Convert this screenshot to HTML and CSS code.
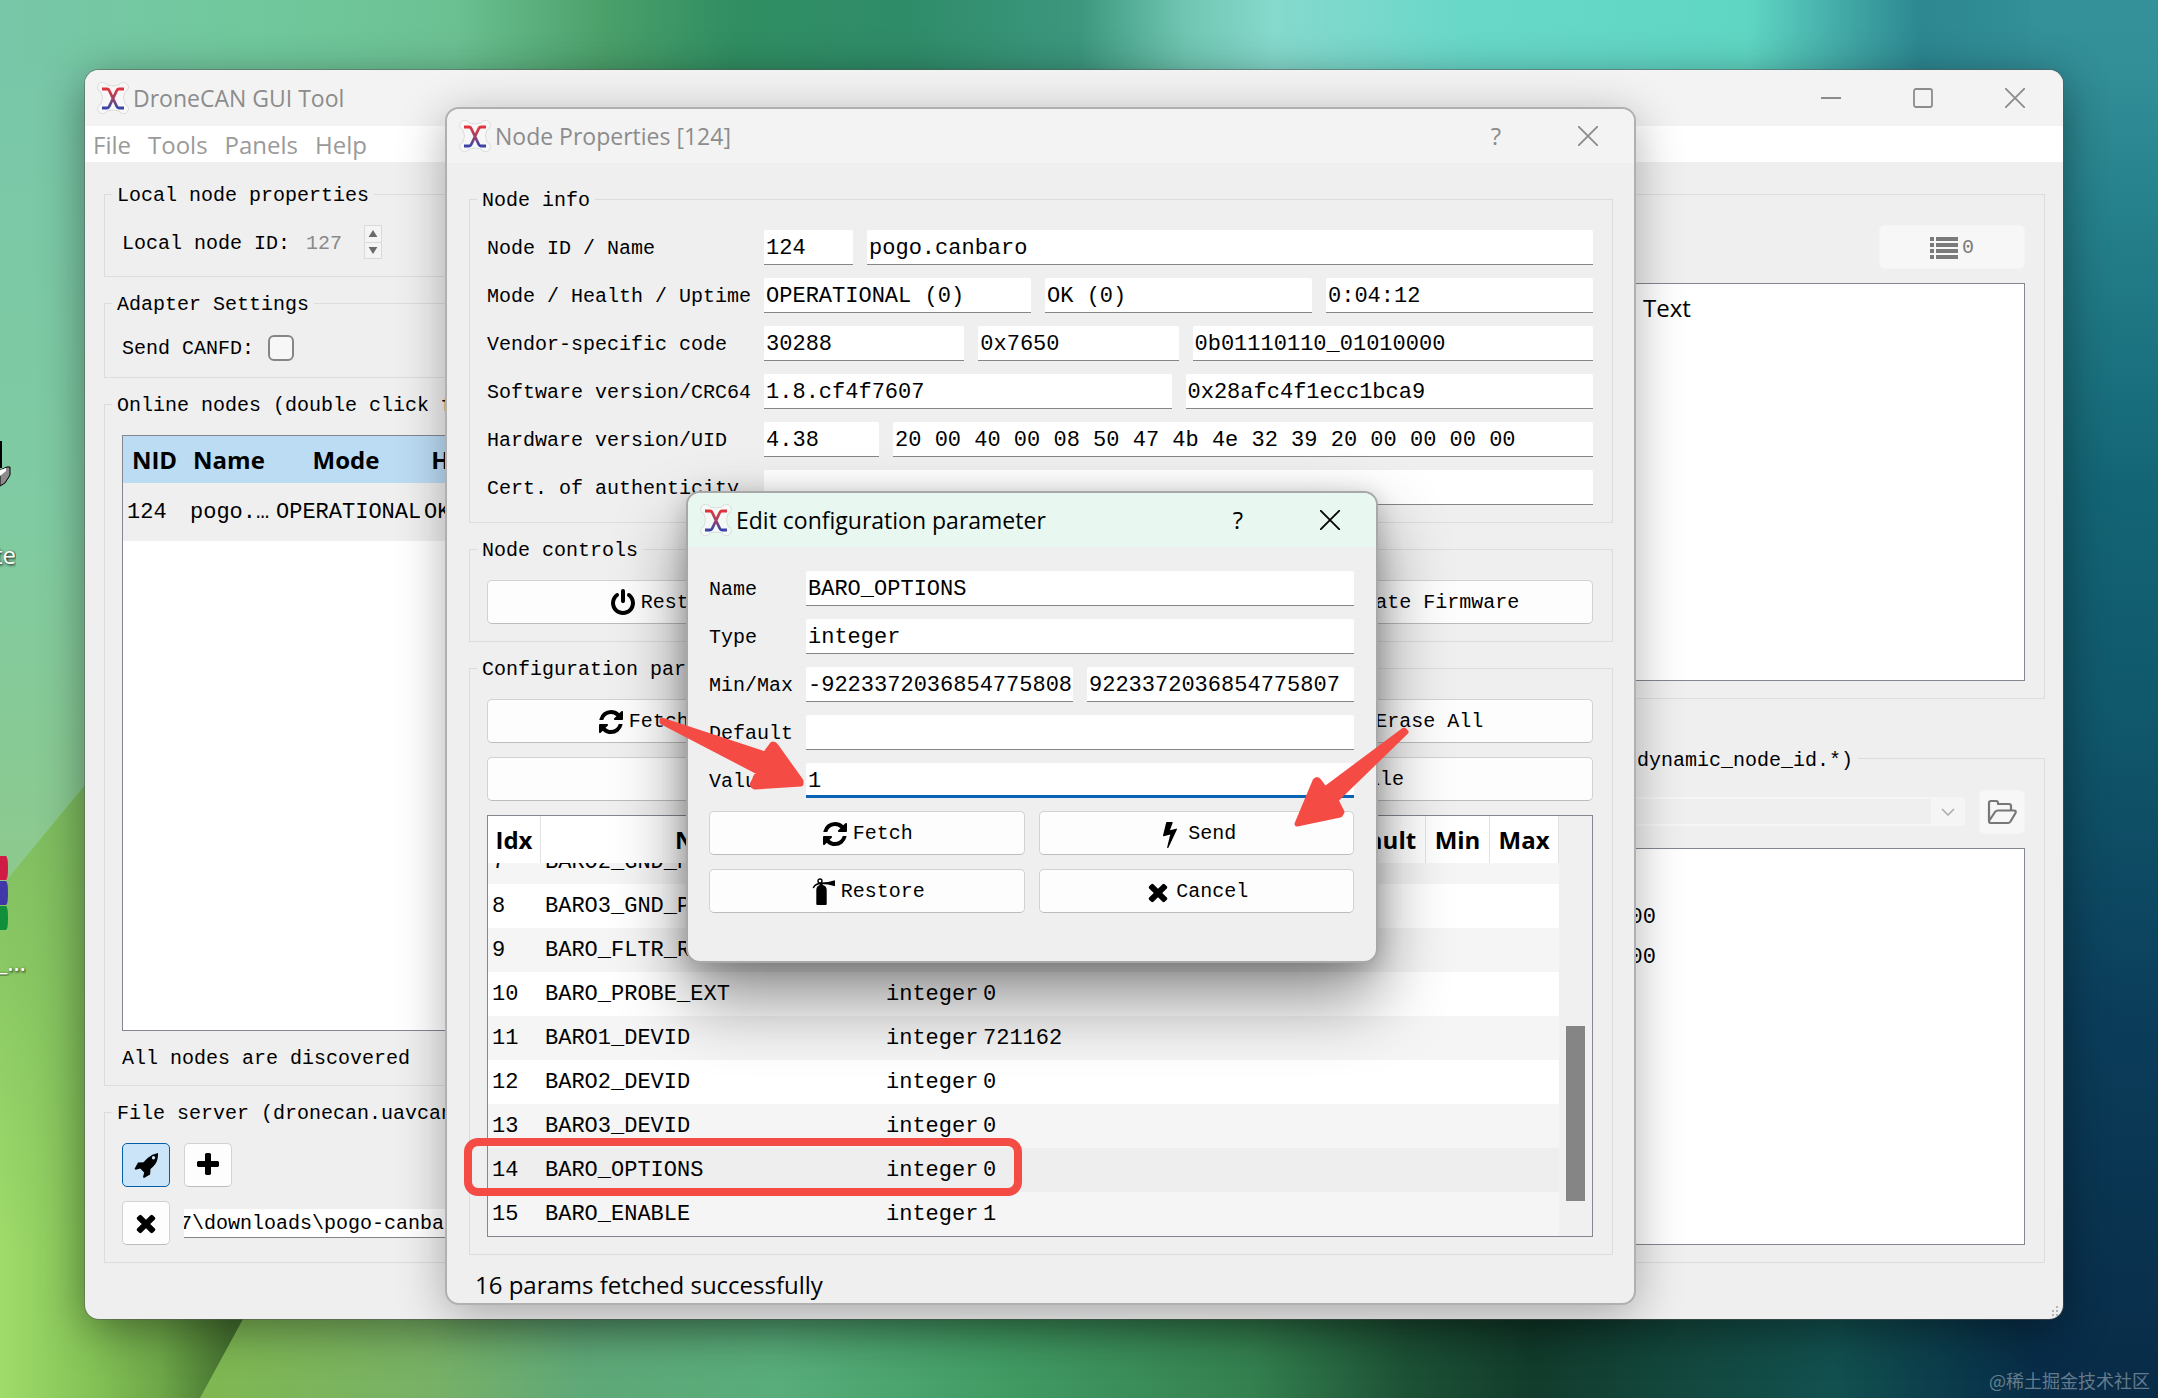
FILE: index.html
```
<!DOCTYPE html>
<html lang="en">
<head>
    <meta charset="UTF-8">
    <title>DroneCAN GUI Tool</title>
    <link rel="stylesheet" href="styles.css">
</head>
<body>
<svg class="sprite" aria-hidden="true">
    <defs>
        <linearGradient id="logo-fill" gradientUnits="userSpaceOnUse" x1="0" y1="5" x2="0" y2="28">
            <stop offset="0.1" stop-color="#e0343f"/>
            <stop offset="0.5" stop-color="#a04468"/>
            <stop offset="0.9" stop-color="#3a44a8"/>
        </linearGradient>
    </defs>
    <symbol id="logo" viewBox="0 0 32 32">
        <path d="M10 3a5 5 0 1 0-6 7q3 6 0 12a5 5 0 1 0 6 7q6-2 12 0a5 5 0 1 0 6-7q-3-6 0-12a5 5 0 1 0-6-7q-6 2-12 0z" fill="#fafafa" fill-opacity=".6" stroke="#dcdcdc"/>
        <path d="M5 7h5q1.500 0 2.200 1.500l7.600 16q.7 1.500 2.200 1.500h5M27 7h-5q-1.500 0-2.200 1.500l-7.600 16q-.7 1.500-2.200 1.500H5" fill="none" stroke="url(#logo-fill)" stroke-width="2.800"/>
    </symbol>
    <symbol id="refresh" viewBox="0 0 1792 1792">
        <path d="M1639 1056q0 5-1 7-64 268-268 434.500t-478 166.500q-146 0-282.500-55t-243.500-157l-129 129q-19 19-45 19t-45-19-19-45v-448q0-26 19-45t45-19h448q26 0 45 19t19 45-19 45l-137 137q71 66 161 102t187 36q134 0 250-65t186-179q11-17 53-117 8-23 30-23h192q13 0 22.500 9.500t9.500 22.500zm25-800v448q0 26-19 45t-45 19h-448q-26 0-45-19t-19-45 19-45l138-138q-148-137-349-137-134 0-250 65t-186 179q-11 17-53 117-8 23-30 23h-199q-13 0-22.500-9.500t-9.500-22.500v-7q65-268 270-434.500t480-166.500q146 0 284 55.500t245 156.500l130-129q19-19 45-19t45 19 19 45z"/>
    </symbol>
    <symbol id="bolt" viewBox="0 0 1792 1792">
        <path d="M1333 566q18 20 7 44l-540 1157q-13 25-42 25-4 0-14-2-17-5-25.500-19t-4.500-30l197-808-406 101q-4 1-12 1-18 0-31-11-18-15-13-39l201-825q4-14 16-23t28-9h328q19 0 32 12.500t13 29.500q0 8-5 18l-171 463 396-98q8-2 12-2 19 0 34 15z"/>
    </symbol>
    <symbol id="power" viewBox="0 0 1792 1792">
        <path d="M1664 896q0 156-61 298t-164 245-245 164-298 61-298-61-245-164-164-245-61-298q0-182 80.500-343t226.500-270q43-32 95.500-25t83.500 50q32 42 24.500 94.500t-49.500 84.500q-98 74-151.500 181t-53.500 228q0 104 40.500 198.500t109.500 163.500 163.500 109.500 198.500 40.500 198.500-40.500 163.500-109.500 109.500-163.500 40.500-198.500q0-121-53.500-228t-151.500-181q-42-32-49.500-84.500t24.500-94.500q31-43 84-50t95 25q146 109 226.500 270t80.500 343zm-640-768v640q0 52-38 90t-90 38-90-38-38-90v-640q0-52 38-90t90-38 90 38 38 90z"/>
    </symbol>
    <symbol id="times" viewBox="0 0 1792 1792">
        <path d="M1490 1322q0 40-28 68l-136 136q-28 28-68 28t-68-28l-294-294-294 294q-28 28-68 28t-68-28l-136-136q-28-28-28-68t28-68l294-294-294-294q-28-28-28-68t28-68l136-136q28-28 68-28t68 28l294 294 294-294q28-28 68-28t68 28l136 136q28 28 28 68t-28 68l-294 294 294 294q28 28 28 68z"/>
    </symbol>
    <symbol id="plus" viewBox="0 0 1792 1792">
        <path d="M1600 736v192q0 40-28 68t-68 28h-416v416q0 40-28 68t-68 28h-192q-40 0-68-28t-28-68v-416h-416q-40 0-68-28t-28-68v-192q0-40 28-68t68-28h416v-416q0-40 28-68t68-28h192q40 0 68 28t28 68v416h416q40 0 68 28t28 68z"/>
    </symbol>
    <symbol id="extinguisher" viewBox="0 0 28 28">
        <path d="M7.300 12q0-4 3.500-5V5h3v2q3.900 1 3.900 5v14q0 1-1 1H8.300q-1 0-1-1z"/>
        <path d="M12 4.600l7-.6 6-1.600q1-.2 1 .6v4.500q0 .8-1 .6l-6-1.600-7-.6z"/>
        <circle cx="11" cy="3" r="2" fill="none" stroke="#000" stroke-width="1.400"/>
        <path d="M12 5.500Q6.500 5.500 4.500 9.500" fill="none" stroke="#000" stroke-width="1.600" stroke-linecap="round"/>
    </symbol>
    <symbol id="rocket" viewBox="0 0 28 28">
        <path fill-rule="evenodd" d="M26 2q.4 7-3 11.500-1.500 2-4.500 4.500l-.4 5.500-6.100 3.500-1-1 1.200-4.500-4-4-4.700 1.200-.9-1L6 11.600l5.500-.4q2.500-3 4.500-4.500Q20 3 26 2zM21.500 5a1.700 1.700 0 1 0 0 3.400 1.700 1.700 0 0 0 0-3.400z"/>
    </symbol>
    <symbol id="list" viewBox="0 0 28 28">
        <path d="M0 3h4v4H0zM6 3h22v4H6zM0 9h4v4H0zM6 9h22v4H6zM0 15h4v4H0zM6 15h22v4H6zM0 21h4v4H0zM6 21h22v4H6z"/>
    </symbol>
    <symbol id="folder" viewBox="0 0 30 28">
        <path d="M2 23V5q0-2 2-2h5q2 0 2 2v1h11q2 0 2 2v4M2 23q0 2 2 2h17q1.500 0 2.500-1.500L28.500 15q1-2.500-1.500-2.500H11q-2 0-3 1.500z" fill="none" stroke="#777" stroke-width="2.200" stroke-linejoin="round"/>
    </symbol>
    <symbol id="close" viewBox="0 0 20 20">
        <path d="M0 0l20 20M20 0L0 20" fill="none" stroke="currentColor" stroke-width="1.800"/>
    </symbol>
</svg>

<div class="desktop">
    <svg class="wallpaper" viewBox="0 0 2158 1398" preserveAspectRatio="none" aria-hidden="true">
        <defs>
            <linearGradient id="w-top">
                <stop offset="0" stop-color="#78c7a8"/>
                <stop offset=".12" stop-color="#70c89c"/>
                <stop offset=".21" stop-color="#6cc193"/>
                <stop offset=".28" stop-color="#4ba06a"/>
                <stop offset=".34" stop-color="#308e62"/>
                <stop offset=".42" stop-color="#2f8c69"/>
                <stop offset=".5" stop-color="#3c977e"/>
                <stop offset=".55" stop-color="#70c6b2"/>
                <stop offset=".59" stop-color="#86d9cd"/>
                <stop offset=".68" stop-color="#68d8c9"/>
                <stop offset=".81" stop-color="#5fd6c3"/>
                <stop offset=".86" stop-color="#3fa3a3"/>
                <stop offset=".89" stop-color="#2c8791"/>
                <stop offset=".94" stop-color="#328e97"/>
            </linearGradient>
            <linearGradient id="w-left" x1="0" y1="0" x2="0" y2="1">
                <stop offset="0" stop-color="#78c7a8"/>
                <stop offset=".5" stop-color="#80cba2"/>
                <stop offset="1" stop-color="#90c988"/>
            </linearGradient>
            <linearGradient id="w-lime" x1="0" y1="1398" x2="230" y2="1398" gradientUnits="userSpaceOnUse">
                <stop offset="0" stop-color="#9fdc6b"/>
                <stop offset=".4" stop-color="#84c256"/>
                <stop offset=".7" stop-color="#6da648"/>
                <stop offset="1" stop-color="#44702f"/>
            </linearGradient>
            <linearGradient id="w-hill" x1="0" y1="0" x2="0" y2="1">
                <stop offset="0" stop-color="#7cba60"/>
                <stop offset="1" stop-color="#7cba60" stop-opacity="0"/>
            </linearGradient>
            <linearGradient id="w-bottom">
                <stop offset=".1" stop-color="#7fb852"/>
                <stop offset=".2" stop-color="#78b166"/>
                <stop offset=".27" stop-color="#5fa878"/>
                <stop offset=".36" stop-color="#58ad7a"/>
                <stop offset=".46" stop-color="#429c64"/>
                <stop offset=".58" stop-color="#34804f"/>
                <stop offset=".65" stop-color="#1d5236"/>
                <stop offset=".71" stop-color="#123c2c"/>
                <stop offset=".78" stop-color="#13483e"/>
                <stop offset=".85" stop-color="#12504f"/>
                <stop offset=".92" stop-color="#09354a"/>
                <stop offset=".94" stop-color="#082e48"/>
            </linearGradient>
            <linearGradient id="w-right" x1="0" y1="0" x2="0" y2="1">
                <stop offset="0" stop-color="#34919a"/>
                <stop offset=".05" stop-color="#328e97"/>
                <stop offset=".15" stop-color="#25818c"/>
                <stop offset=".35" stop-color="#136575"/>
                <stop offset=".52" stop-color="#10576b"/>
                <stop offset=".72" stop-color="#0b3e5b"/>
                <stop offset="1" stop-color="#082b47"/>
            </linearGradient>
        </defs>
        <path d="M0 0h2158v700H0z" fill="url(#w-top)"/>
        <path d="M0 700h2158v698H0z" fill="url(#w-bottom)"/>
        <path d="M0 70h110v900H0z" fill="url(#w-left)"/>
        <path d="M2030 0h128v1398h-128z" fill="url(#w-right)"/>
        <path d="M0 888L110 755H300V1200L243 1319 200 1398H0z" fill="url(#w-lime)"/>
        <path d="M0 888L110 755V1250H0z" fill="url(#w-hill)"/>
        <!-- desktop icons cut off by the left edge -->
        <path d="M0 441h2v27H0z"/>
        <path d="M0 470l7-3h3v8l-5 8-5 3z" fill="#8c8c8c" stroke="#000"/>
        <path d="M0 470l6-2v3l-6 5z" fill="#fff"/>
        <path d="M0 856h6q2 1 2 12t-2 12H0z" fill="#d01c44"/>
        <path d="M0 881h6q2 1 2 12t-2 12H0z" fill="#4038a8"/>
        <path d="M0 906h6q2 1 2 12t-2 12H0z" fill="#10903a"/>
    </svg>
    <span class="shortcut shortcut-note">te</span>
    <span class="shortcut shortcut-rar">_…</span>

    <main class="window main-window">
        <header class="title-bar">
            <svg class="logo"><use href="#logo"/></svg>
            <h1 class="title">DroneCAN GUI Tool</h1>
            <button class="caption-btn" aria-label="Minimize"><svg viewBox="0 0 20 20"><path d="M0 10h20" stroke="currentColor" stroke-width="2"/></svg></button>
            <button class="caption-btn" aria-label="Maximize"><svg viewBox="0 0 20 20"><rect x="1" y="1" width="18" height="18" rx="2" fill="none" stroke="currentColor" stroke-width="1.800"/></svg></button>
            <button class="caption-btn" aria-label="Close"><svg><use href="#close"/></svg></button>
        </header>
        <nav class="menu-bar">
            <a href="#">File</a>
            <a href="#">Tools</a>
            <a href="#">Panels</a>
            <a href="#">Help</a>
        </nav>
        <div class="main-body">
            <div class="column">
                <fieldset class="group">
                    <legend>Local node properties</legend>
                    <div class="row">
                        <label for="local-id">Local node ID:</label>
                        <input class="spin-value" id="local-id" type="text" value="127" disabled>
                        <span class="spin">
                            <button aria-label="Increase" disabled><svg viewBox="0 0 10 8"><path d="M0 8l5-8 5 8z"/></svg></button>
                            <button aria-label="Decrease" disabled><svg viewBox="0 0 10 8"><path d="M0 0l5 8 5-8z"/></svg></button>
                        </span>
                    </div>
                </fieldset>
                <fieldset class="group adapter-group">
                    <legend>Adapter Settings</legend>
                    <div class="row">
                        <label for="canfd">Send CANFD:</label>
                        <input class="check" id="canfd" type="checkbox">
                    </div>
                </fieldset>
                <fieldset class="group group-grow nodes-group">
                    <legend>Online nodes (double click for more options)</legend>
                    <div class="view">
                        <table class="nodes">
                            <thead>
                                <tr><th class="c-nid">NID</th><th class="c-name">Name</th><th class="c-mode">Mode</th><th class="c-health">Health</th><th></th></tr>
                            </thead>
                            <tbody>
                                <tr><td>124</td><td>pogo.…</td><td>OPERATIONAL</td><td>OK</td><td></td></tr>
                            </tbody>
                        </table>
                    </div>
                    <p class="note">All nodes are discovered</p>
                </fieldset>
                <fieldset class="group file-group">
                    <legend>File server (dronecan.uavcan.protocol.file.*)</legend>
                    <div class="row">
                        <button class="btn btn-square btn-on" aria-label="Start"><svg class="icon"><use href="#rocket"/></svg></button>
                        <button class="btn btn-square" aria-label="Add path"><svg class="icon"><use href="#plus"/></svg></button>
                    </div>
                    <div class="row">
                        <button class="btn btn-square" aria-label="Remove path"><svg class="icon"><use href="#times"/></svg></button>
                        <input class="path" type="text" aria-label="Path" value="7\downloads\pogo-canbaro.bin">
                    </div>
                </fieldset>
            </div>
            <div class="column column-right">
                <fieldset class="group group-grow">
                    <legend></legend>
                    <div class="row row-end">
                        <button class="btn btn-count" disabled><svg class="icon"><use href="#list"/></svg>0</button>
                    </div>
                    <div class="view">
                        <table class="log">
                            <thead><tr><th class="c-rest"></th><th>Text</th></tr></thead>
                        </table>
                    </div>
                </fieldset>
                <fieldset class="group group-grow">
                    <legend>Dynamic node ID allocation server (dronecan.uavcan.protocol.dynamic_node_id.*)</legend>
                    <div class="row">
                        <span class="combo">
                            <select aria-label="Database" disabled><option></option></select>
                            <svg viewBox="0 0 14 8"><path d="M1 1l6 6 6-6" fill="none" stroke="#aaa" stroke-width="1.500"/></svg>
                        </span>
                        <button class="btn btn-folder" aria-label="Open" disabled><svg class="icon-folder"><use href="#folder"/></svg></button>
                    </div>
                    <div class="view">
                        <table class="alloc">
                            <tbody>
                                <tr><td class="c-uid">00 00 00 00</td><td></td></tr>
                                <tr><td class="c-uid">00 00 00 00</td><td></td></tr>
                            </tbody>
                        </table>
                    </div>
                </fieldset>
            </div>
        </div>
        <svg class="grip" viewBox="0 0 10 10"><path d="M6 0h2v2H6zM6 4h2v2H6zM2 4h2v2H2zM6 8h2v2H6zM2 8h2v2H2z" fill="#b4b4b4"/></svg>
    </main>

    <section class="window dialog node-dialog">
        <header class="title-bar">
            <svg class="logo"><use href="#logo"/></svg>
            <h2 class="title">Node Properties [124]</h2>
            <button class="caption-btn">?</button>
            <button class="caption-btn" aria-label="Close"><svg><use href="#close"/></svg></button>
        </header>
        <div class="node-body">
            <fieldset class="group node-group">
                <legend>Node info</legend>
                <div class="form">
                    <label for="node-id">Node ID / Name</label>
                    <div class="fields fields-id">
                        <input class="field" id="node-id" value="124" readonly>
                        <input class="field" aria-label="Name" value="pogo.canbaro" readonly>
                    </div>
                    <label for="mode">Mode / Health / Uptime</label>
                    <div class="fields fields-three">
                        <input class="field" id="mode" value="OPERATIONAL (0)" readonly>
                        <input class="field" aria-label="Health" value="OK (0)" readonly>
                        <input class="field" aria-label="Uptime" value="0:04:12" readonly>
                    </div>
                    <label for="vendor">Vendor-specific code</label>
                    <div class="fields fields-vendor">
                        <input class="field" id="vendor" value="30288" readonly>
                        <input class="field" aria-label="Hex" value="0x7650" readonly>
                        <input class="field" aria-label="Binary" value="0b01110110_01010000" readonly>
                    </div>
                    <label for="sw">Software version/CRC64</label>
                    <div class="fields fields-two">
                        <input class="field" id="sw" value="1.8.cf4f7607" readonly>
                        <input class="field" aria-label="CRC64" value="0x28afc4f1ecc1bca9" readonly>
                    </div>
                    <label for="hw">Hardware version/UID</label>
                    <div class="fields fields-hw">
                        <input class="field" id="hw" value="4.38" readonly>
                        <input class="field" aria-label="UID" value="20 00 40 00 08 50 47 4b 4e 32 39 20 00 00 00 00" readonly>
                    </div>
                    <label for="cert">Cert. of authenticity</label>
                    <div class="fields">
                        <input class="field" id="cert" value="" readonly>
                    </div>
                </div>
            </fieldset>
            <fieldset class="group node-group">
                <legend>Node controls</legend>
                <div class="buttons-three">
                    <button class="btn"><svg class="icon"><use href="#power"/></svg>Restart</button>
                    <button class="btn">Get Transport Stats</button>
                    <button class="btn"><svg class="icon"><use href="#bolt"/></svg>Update Firmware</button>
                </div>
            </fieldset>
            <fieldset class="group group-grow node-group params-group">
                <legend>Configuration parameters (double click to change)</legend>
                <div class="buttons-three">
                    <button class="btn"><svg class="icon"><use href="#refresh"/></svg>Fetch All</button>
                    <button class="btn">Store All</button>
                    <button class="btn"><svg class="icon"><use href="#extinguisher"/></svg>Erase All</button>
                </div>
                <div class="fields-two">
                    <button class="btn">Save To File</button>
                    <button class="btn">Load From File</button>
                </div>
                <div class="view params-view">
                    <div class="params-scroll">
                        <table class="params">
                            <thead>
                                <tr><th class="c-idx">Idx</th><th class="c-param">Name</th><th class="c-type">Type</th><th>Value</th><th class="c-default">Default</th><th class="c-min">Min</th><th class="c-max">Max</th></tr>
                            </thead>
                            <tbody>
                                <tr><td>7</td><td>BARO2_GND_PRESS</td><td>real</td><td>0.0</td><td></td><td></td><td></td></tr>
                                <tr><td>8</td><td>BARO3_GND_PRESS</td><td>real</td><td>0.0</td><td></td><td></td><td></td></tr>
                                <tr><td>9</td><td>BARO_FLTR_RNG</td><td>integer</td><td>0</td><td></td><td></td><td></td></tr>
                                <tr><td>10</td><td>BARO_PROBE_EXT</td><td>integer</td><td>0</td><td></td><td></td><td></td></tr>
                                <tr><td>11</td><td>BARO1_DEVID</td><td>integer</td><td>721162</td><td></td><td></td><td></td></tr>
                                <tr><td>12</td><td>BARO2_DEVID</td><td>integer</td><td>0</td><td></td><td></td><td></td></tr>
                                <tr><td>13</td><td>BARO3_DEVID</td><td>integer</td><td>0</td><td></td><td></td><td></td></tr>
                                <tr class="selected"><td>14</td><td>BARO_OPTIONS</td><td>integer</td><td>0</td><td></td><td></td><td></td></tr>
                                <tr><td>15</td><td>BARO_ENABLE</td><td>integer</td><td>1</td><td></td><td></td><td></td></tr>
                            </tbody>
                        </table>
                    </div>
                    <div class="scrollbar"><div class="thumb"></div></div>
                </div>
            </fieldset>
            <p class="status">16 params fetched successfully</p>
        </div>
    </section>

    <section class="window dialog edit-dialog">
        <header class="title-bar">
            <svg class="logo"><use href="#logo"/></svg>
            <h2 class="title">Edit configuration parameter</h2>
            <button class="caption-btn">?</button>
            <button class="caption-btn" aria-label="Close"><svg><use href="#close"/></svg></button>
        </header>
        <div class="edit-body">
            <div class="form">
                <label for="p-name">Name</label>
                <div class="fields"><input class="field" id="p-name" value="BARO_OPTIONS" readonly></div>
                <label for="p-type">Type</label>
                <div class="fields"><input class="field" id="p-type" value="integer" readonly></div>
                <label for="p-min">Min/Max</label>
                <div class="fields fields-two">
                    <input class="field" id="p-min" value="-9223372036854775808" readonly>
                    <input class="field" aria-label="Max" value="9223372036854775807" readonly>
                </div>
                <label for="p-default">Default</label>
                <div class="fields"><input class="field" id="p-default" value="" readonly></div>
                <label for="p-value">Value</label>
                <div class="fields"><input class="field field-active" id="p-value" value="1"></div>
            </div>
            <div class="buttons-two">
                <button class="btn"><svg class="icon"><use href="#refresh"/></svg>Fetch</button>
                <button class="btn"><svg class="icon"><use href="#bolt"/></svg>Send</button>
                <button class="btn"><svg class="icon"><use href="#extinguisher"/></svg>Restore</button>
                <button class="btn"><svg class="icon"><use href="#times"/></svg>Cancel</button>
            </div>
        </div>
    </section>

    <!-- red marks over the windows -->
    <div class="mark-box"></div>
    <svg class="mark-arrow mark-value" viewBox="0 0 150 80"><path d="M8 6L111 40 117 32Q119 28 122 32L147 67 147 70 101 73Q97 72 99 69L104 58 8 8z"/></svg>
    <svg class="mark-arrow mark-send" viewBox="0 0 120 104"><path d="M112 6L114 8 44 76 50 88 48 91 5 100 23 57Q25 54 27 57L33 65z"/></svg>

    <span class="watermark">@稀土掘金技术社区</span>
</div>
</body>
</html>
```

FILE: styles.css
```
*{
    box-sizing:border-box;
    margin:0;
    padding:0;
}
body{
    font-family:"Liberation Mono", "Noto Sans CJK SC", monospace;
    font-size:20px;
    line-height:28px;
    color:#000;
}
button,input,select{
    font:inherit;
    color:inherit;
}
label{
    padding-top:3px;
}
.sprite{
    position:absolute;
    width:0;
    height:0;
}
.desktop{
    position:relative;
    min-height:100vh;
    overflow:hidden;
    background:#2f8c69;
}
.wallpaper{
    position:absolute;
    width:100%;
    height:100%;
}
.shortcut{
    position:absolute;
    left:0;
    display:flex;
    justify-content:flex-end;
    overflow:hidden;
    font-family:"Open Sans", sans-serif;
    font-size:24px;
    color:#fff;
    text-shadow:1px 1px 3px #000;
}
.shortcut-note{
    top:541px;
    width:16px;
}
.shortcut-rar{
    top:948px;
    width:26px;
}

/* windows */
.window{
    position:absolute;
    display:flex;
    flex-direction:column;
    border-radius:14px;
    overflow:hidden;
    background:#efefef;
}
.main-window{
    top:70px;
    right:95px;
    bottom:79px;
    left:85px;
    box-shadow:0 0 0 1px rgba(90,90,90,.5), 0 10px 46px rgba(0,0,0,.42);
}
.dialog{
    border:2px solid #b0b0b0;
}
.node-dialog{
    top:107px;
    right:522px;
    bottom:93px;
    left:445px;
    box-shadow:0 10px 48px rgba(0,0,0,.3);
}
.edit-dialog{
    top:491px;
    left:686px;
    width:692px;
    border-color:#a8a8a8;
    box-shadow:0 36px 70px rgba(0,0,0,.45), 0 4px 24px rgba(0,0,0,.2);
}
.title-bar{
    display:flex;
    align-items:center;
    flex:none;
    height:56px;
    padding-right:2px;
    padding-left:12px;
    background:#f3f3f3;
    color:#8c8c8c;
}
.dialog .title-bar{
    height:54px;
    padding-right:0;
}
.edit-dialog .title-bar{
    background:#e8f8f0;
    color:#000;
}
.logo{
    width:32px;
    height:32px;
}
.title{
    flex:1;
    padding-left:4px;
    font-family:"Open Sans", sans-serif;
    font-size:23px;
    font-weight:400;
}
.caption-btn{
    width:92px;
    height:54px;
    border:0;
    background:none;
    font-family:"Open Sans", sans-serif;
    font-size:24px;
}
.caption-btn svg{
    display:block;
    width:20px;
    height:20px;
    margin:0 auto;
    overflow:visible;
}
.menu-bar{
    display:flex;
    flex:none;
    gap:17px;
    height:36px;
    padding-left:8px;
    background:#fff;
    font-family:"Open Sans", sans-serif;
    font-size:24px;
    line-height:38px;
}
.menu-bar a{
    color:#9a9a9a;
    text-decoration:none;
}
.main-body{
    flex:1;
    min-height:0;
    display:grid;
    grid-template-columns:20fr 29fr;
    gap:13px;
    padding:18px 18px 56px 19px;
}
.column{
    display:flex;
    flex-direction:column;
    gap:12px;
    min-width:0;
    min-height:0;
}
.column-right{
    gap:46px;
}
.grip{
    position:absolute;
    right:3px;
    bottom:3px;
    width:10px;
    height:10px;
}

/* group boxes */
.group{
    min-width:0;
    padding:17px;
    border:1px solid #dcdcdc;
}
.group legend{
    height:28px;
    margin-left:-10px;
    padding:2px 5px 0;
    white-space:nowrap;
}
.group legend:empty{
    padding:0;
}
.group-grow{
    flex:1;
    display:flex;
    flex-direction:column;
    gap:14px;
    min-height:0;
}
.column-right .group{
    padding-right:19px;
}
.row{
    display:flex;
    align-items:center;
    gap:14px;
}
.row-end{
    justify-content:flex-end;
}
.view{
    flex:1;
    min-height:0;
    border:1px solid #828790;
    background:#fff;
    overflow:hidden;
}
.spin-value{
    width:46px;
    height:32px;
    padding:3px 0 0 2px;
    border:0;
    background:none;
    color:#8a8a8a;
}
.spin{
    display:flex;
    flex-direction:column;
    width:18px;
    height:34px;
    border:1px solid #dadada;
}
.spin button{
    flex:1;
    border:0;
    background:#f4f4f4;
}
.spin button + button{
    border-top:1px solid #dadada;
}
.spin svg{
    display:block;
    width:10px;
    height:7px;
    margin:0 auto;
    fill:#6a6a6a;
}
.adapter-group{
    padding-top:15px;
    padding-bottom:14px;
}
.check{
    appearance:none;
    width:26px;
    height:26px;
    border:2px solid #868686;
    border-radius:6px;
    background:#f7f7f7;
}
.nodes-group{
    padding-bottom:12px;
}
.file-group{
    display:flex;
    flex-direction:column;
    gap:14px;
}
.path{
    flex:1;
    height:29px;
    padding-top:2px;
    border:0;
    border-bottom:1px solid #868686;
    background:#fff;
    text-indent:-4px;
}
.combo{
    position:relative;
    flex:1;
    height:29px;
}
.combo select{
    appearance:none;
    display:block;
    width:100%;
    height:100%;
    border:2px solid #f8f8f8;
    border-right-width:34px;
    border-radius:3px;
    background:#efefef;
}
.combo svg{
    position:absolute;
    top:11px;
    right:10px;
    width:14px;
    height:8px;
}

/* buttons */
.btn{
    display:flex;
    align-items:center;
    justify-content:center;
    gap:4px;
    height:44px;
    padding-top:2px;
    border:1px solid #d2d2d2;
    border-bottom-color:#bcbcbc;
    border-radius:5px;
    background:#fdfdfd;
}
.icon{
    width:28px;
    height:28px;
}
.btn-square{
    width:48px;
    padding-top:0;
}
.btn-on{
    border-color:#005fa8;
    background:#cce4f7;
}
.btn:disabled{
    border-color:#f4f4f4;
    background:#f7f7f7;
    color:#7a7a7a;
    fill:#7a7a7a;
}
.btn-count{
    width:146px;
}
.btn-folder{
    width:46px;
    padding-top:0;
}
.icon-folder{
    width:32px;
    height:28px;
}
.buttons-three{
    display:grid;
    grid-template-columns:repeat(3, 1fr);
    gap:14px;
}
.buttons-two{
    display:grid;
    grid-template-columns:1fr 1fr;
    gap:14px;
    margin-top:13px;
}

/* forms */
.node-body{
    flex:1;
    display:flex;
    flex-direction:column;
    gap:12px;
    min-height:0;
    padding:22px 21px 2px 22px;
}
.node-group{
    padding-right:19px;
}
.form{
    display:grid;
    grid-template-columns:auto 1fr;
    gap:13px;
    align-items:center;
}
.fields{
    display:grid;
    gap:14px;
}
.fields-id{
    grid-template-columns:89px 1fr;
}
.fields-two{
    display:grid;
    grid-template-columns:1fr 1fr;
    gap:14px;
}
.fields-three{
    grid-template-columns:repeat(3, 1fr);
}
.fields-vendor{
    grid-template-columns:1fr 1fr 2fr;
}
.fields-hw{
    grid-template-columns:115px 1fr;
}
.field{
    width:100%;
    min-width:0;
    height:35px;
    padding:2px 2px 0;
    border:0;
    border-bottom:1px solid #868686;
    border-radius:2px 2px 0 0;
    background:#fff;
    font-size:22px;
    outline:0;
}
.field-active{
    padding-top:4px;
    border-bottom:3px solid #0a63b4;
}
.edit-body{
    padding:24px 22px 48px 21px;
}
.status{
    padding:2px 0 0 6px;
    font-family:"Open Sans", sans-serif;
    font-size:24px;
    line-height:32px;
}

/* tables */
table{
    width:100%;
    border-collapse:separate;
    border-spacing:0;
    table-layout:fixed;
}
th{
    font-family:"Open Sans", sans-serif;
    font-size:24px;
    font-weight:700;
    text-align:center;
}
td{
    padding:2px 0 0 4px;
    font-size:22px;
    white-space:nowrap;
    overflow:hidden;
}
.nodes th{
    height:47px;
    background:#bcdcf4;
}
.nodes td{
    height:58px;
    background:#efefef;
}
.c-nid{
    width:63px;
}
.c-name{
    width:86px;
}
.c-mode{
    width:148px;
}
.c-health{
    width:103px;
}
.log th{
    height:48px;
    font-weight:400;
    text-align:left;
}
.c-rest{
    width:720px;
}
.alloc{
    margin-top:48px;
}
.alloc td{
    height:40px;
}
.alloc .c-uid{
    width:733px;
    text-align:right;
}
.params-view{
    display:grid;
    grid-template-columns:1fr 33px;
}
/* the list is scrolled to its end, the header stays */
.params-scroll{
    display:flex;
    flex-direction:column;
    justify-content:flex-end;
    min-height:0;
    overflow:hidden;
}
.params{
    flex:none;
}
.params th{
    position:sticky;
    top:0;
    height:47px;
    border-right:1px solid #e2e2e2;
    background:#fff;
}
.params td{
    height:44px;
}
.params tr:nth-child(odd) td{
    background:#f5f5f5;
}
.params .selected td{
    background:#eee;
}
.c-idx{
    width:53px;
}
.c-param{
    width:341px;
}
.c-type{
    width:97px;
}
.c-default{
    width:108px;
}
.c-min{
    width:64px;
}
.c-max{
    width:69px;
}
.scrollbar{
    padding:210px 7px 0;
    background:#f0f0f0;
}
.thumb{
    height:175px;
    background:#858585;
}

/* marks */
.mark-box{
    position:absolute;
    top:1138px;
    left:464px;
    width:558px;
    height:58px;
    border:8px solid #f54b45;
    border-radius:14px;
}
.mark-arrow{
    position:absolute;
    fill:#f54b45;
    stroke:#f54b45;
    stroke-width:5px;
    stroke-linejoin:round;
}
.mark-value{
    top:714px;
    left:654px;
    width:150px;
    height:80px;
}
.mark-send{
    top:724px;
    left:1292px;
    width:120px;
    height:104px;
}
.watermark{
    position:absolute;
    right:8px;
    bottom:4px;
    font-family:"Noto Sans CJK SC", sans-serif;
    font-size:18px;
    color:rgba(255,255,255,.38);
}
```
